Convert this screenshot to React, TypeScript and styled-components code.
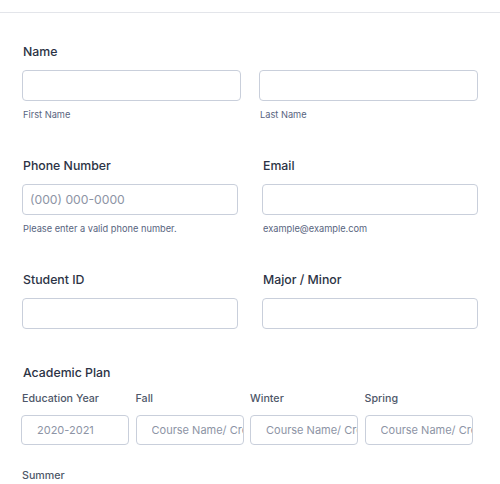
import React from "react";
import styled, { createGlobalStyle } from "styled-components";

const GlobalStyle = createGlobalStyle`
  body {
    margin: 0;
    background: #ffffff;
    font-family: Inter, "Noto Sans", sans-serif;
    color: #2c3345;
  }
`;

const Page = styled.div`
  width: 500px;
`;

const TopBar = styled.div`
  height: 12px;
  border-bottom: 1px solid #e3e5ea;
`;

const Form = styled.form`
  padding: 29px 22px 0 22px;
`;

const Section = styled.div`
  margin-bottom: 34px;
`;

const Label = styled.div`
  font-size: 12.3px;
  line-height: 20px;
  font-weight: 500;
  color: #2c3345;
  margin-bottom: 8px;
  padding-left: 1px;
`;

const Row = styled.div<{ $gap: number }>`
  display: grid;
  grid-template-columns: 1fr 1fr;
  column-gap: ${(p) => p.$gap}px;
`;

const Field = styled.div`
  display: flex;
  flex-direction: column;
`;

const Input = styled.input`
  box-sizing: border-box;
  width: 100%;
  height: 31px;
  border: 1px solid #c9cfdb;
  border-radius: 4px;
  background: #fff;
  padding: 0 7px;
  font-family: Inter, "Noto Sans", sans-serif;
  font-size: 12.2px;
  color: #2c3345;
  outline: none;
  &::placeholder {
    color: #8d94a5;
  }
`;

const SubLabel = styled.div`
  margin-top: 7px;
  padding-left: 1px;
  font-size: 9.25px;
  line-height: 14px;
  color: #57647e;
`;

const PlanTitle = styled.div`
  font-size: 12.3px;
  line-height: 20px;
  font-weight: 500;
  color: #2c3345;
  margin-top: 1px;
  margin-bottom: 8px;
  padding-left: 1px;
`;

const PlanGrid = styled.div`
  display: grid;
  grid-template-columns: repeat(4, 108px);
  column-gap: 6.5px;
  margin-left: -1px;
`;

const ColLabel = styled.div<{ $indent?: number }>`
  font-size: 10.7px;
  line-height: 16px;
  font-weight: 500;
  color: #4e5769;
  margin-bottom: 8px;
  padding-left: ${(p) => p.$indent ?? 0}px;
`;

const PlanInput = styled(Input)`
  height: 30px;
  padding: 0 0 0 15px;
  font-size: 11px;
`;

const Summer = styled.div`
  margin-top: 23px;
  font-size: 10.7px;
  line-height: 16px;
  font-weight: 500;
  color: #4e5769;
`;

const columns = [
  { label: "Education Year", placeholder: "2020-2021", indent: 1 },
  { label: "Fall", placeholder: "Course Name/ Credits" },
  { label: "Winter", placeholder: "Course Name/ Credits" },
  { label: "Spring", placeholder: "Course Name/ Credits" },
];

export default function App() {
  return (
    <Page>
      <GlobalStyle />
      <TopBar />
      <Form onSubmit={(e) => e.preventDefault()}>
        <Section>
          <Label>Name</Label>
          <Row $gap={18}>
            <Field>
              <Input type="text" />
              <SubLabel>First Name</SubLabel>
            </Field>
            <Field>
              <Input type="text" />
              <SubLabel>Last Name</SubLabel>
            </Field>
          </Row>
        </Section>

        <Section>
          <Row $gap={24}>
            <Field>
              <Label>Phone Number</Label>
              <Input type="tel" placeholder="(000) 000-0000" />
              <SubLabel>Please enter a valid phone number.</SubLabel>
            </Field>
            <Field>
              <Label>Email</Label>
              <Input type="email" />
              <SubLabel>example@example.com</SubLabel>
            </Field>
          </Row>
        </Section>

        <Section>
          <Row $gap={24}>
            <Field>
              <Label>Student ID</Label>
              <Input type="text" />
            </Field>
            <Field>
              <Label>Major / Minor</Label>
              <Input type="text" />
            </Field>
          </Row>
        </Section>

        <PlanTitle>Academic Plan</PlanTitle>
        <PlanGrid>
          {columns.map((c) => (
            <Field key={c.label}>
              <ColLabel $indent={c.indent}>{c.label}</ColLabel>
              <PlanInput type="text" placeholder={c.placeholder} />
            </Field>
          ))}
        </PlanGrid>
        <Summer>Summer</Summer>
      </Form>
    </Page>
  );
}
